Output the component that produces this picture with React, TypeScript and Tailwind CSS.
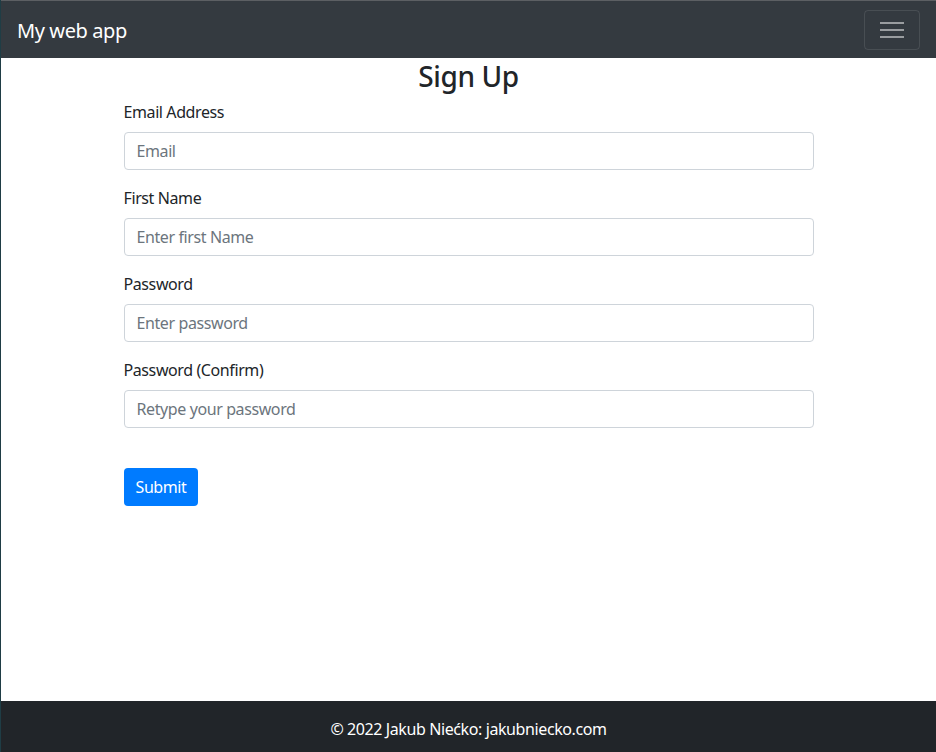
import React from "react";

const fields = [
  { id: "email", label: "Email Address", type: "email", placeholder: "Email" },
  { id: "firstName", label: "First Name", type: "text", placeholder: "Enter first Name" },
  { id: "password1", label: "Password", type: "password", placeholder: "Enter password" },
  { id: "password2", label: "Password (Confirm)", type: "password", placeholder: "Retype your password" },
];

export default function App() {
  return (
    <div
      className="flex h-screen flex-col border-l border-l-[#1f3d45] bg-white tracking-[-0.025em] text-[#212529]"
      style={{ fontFamily: '"Noto Sans", "Open Sans", sans-serif' }}
    >
      {/* Navbar */}
      <nav className="flex h-[58px] shrink-0 items-center justify-between border-t border-t-[#5c5f63] bg-[#343a40] pl-4 pr-4">
        <a href="#" className="pt-[3px] text-[20px] leading-[30px] text-white">
          My web app
        </a>
        <button
          type="button"
          className="flex h-10 w-14 items-center justify-center rounded border border-white/10"
          aria-label="Toggle navigation"
        >
          <svg width="24" height="18" viewBox="0 0 24 18" className="text-white/50">
            <path d="M0 2h24M0 9h24M0 16h24" stroke="currentColor" strokeWidth="2" />
          </svg>
        </button>
      </nav>

      {/* Content */}
      <main className="flex-1">
        <div className="mx-auto w-full max-w-[720px] px-[15px]">
          <h3 className="mb-[6px] mt-[2px] text-center text-[28px] font-medium leading-[1.2]">Sign Up</h3>
          <form onSubmit={(e) => e.preventDefault()}>
            {fields.map((f) => (
              <div key={f.id} className="mb-4">
                <label htmlFor={f.id} className="mb-2 block text-base leading-6">
                  {f.label}
                </label>
                <input
                  id={f.id}
                  type={f.type}
                  placeholder={f.placeholder}
                  className="block h-[38px] w-full rounded border border-[#ced4da] px-3 py-1.5 text-base leading-6 placeholder:text-[#6c757d] focus:outline-none"
                />
              </div>
            ))}
            <br />
            <button
              type="submit"
              className="h-[38px] rounded bg-[#007bff] px-3 text-base leading-6 text-white"
            >
              Submit
            </button>
          </form>
        </div>
      </main>

      {/* Footer */}
      <footer className="h-[51px] shrink-0 bg-[#212529] pt-4 text-center text-base leading-6 text-white">
        © 2022 Jakub Niećko: jakubniecko.com
      </footer>
    </div>
  );
}
